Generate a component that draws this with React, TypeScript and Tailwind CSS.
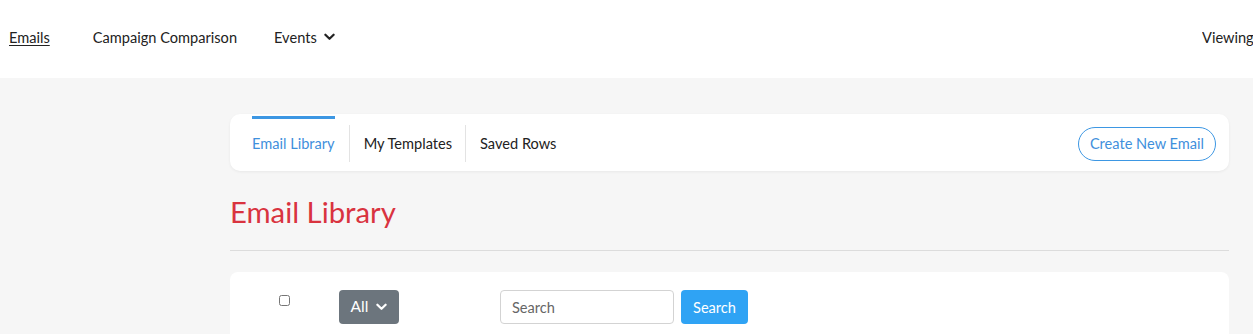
import React from "react";

function Chevron({ className }: { className?: string }) {
  return (
    <svg viewBox="0 0 12 8" className={className} fill="none" stroke="currentColor" strokeWidth="2.4" strokeLinecap="round" strokeLinejoin="round">
      <path d="M1.5 1.5 L6 6 L10.5 1.5" />
    </svg>
  );
}

export default function App() {
  return (
    <div className="h-[334px] bg-[#f6f6f6] text-[#222] overflow-hidden" style={{ fontFamily: "Lato, 'Open Sans', sans-serif" }}>
      <header className="h-[78px] bg-white flex items-center justify-between text-[14.6px] whitespace-nowrap pb-[3px]">
        <nav className="flex items-center">
          <a className="ml-[9px] underline underline-offset-2 text-[#222]">Emails</a>
          <a className="ml-[43px] text-[#222]">Campaign Comparison</a>
          <a className="ml-[37px] flex items-center text-[#222]">
            Events
            <Chevron className="ml-[7px] w-[11px] h-[8px]" />
          </a>
        </nav>
        <div className="w-[51px] overflow-hidden">Viewing</div>
      </header>

      <main className="ml-[230px] mr-[24px] pt-[36px]">
        <div className="relative h-[57px] bg-white rounded-[10px] shadow-[0_1px_3px_rgba(0,0,0,0.06)] flex items-center justify-between text-[14.6px] pr-[13px]">
          <div className="flex items-center h-full pt-[2px]">
            <div className="relative ml-[22px] h-full flex items-center text-[#3f90dc]">
              <span className="absolute left-0 right-0 top-0 h-[3px] bg-[#3d97e3]" />
              Email Library
            </div>
            <div className="w-px h-[37px] bg-[#e3e3e3] ml-[14px]" />
            <div className="ml-[14px] text-[#222]">My Templates</div>
            <div className="w-px h-[37px] bg-[#e3e3e3] ml-[13px]" />
            <div className="ml-[14px] text-[#222]">Saved Rows</div>
          </div>
          <button className="h-[34px] px-[11px] mt-[2px] rounded-full border border-[#3d97e3] text-[#3f90dc] text-[14.6px] bg-white">
            Create New Email
          </button>
        </div>

        <h1 className="mt-[23px] text-[29.3px] leading-[36px] text-[#d9333f]">Email Library</h1>
        <div className="mt-[20px] h-px bg-[#dcdcdc]" />

        <div className="mt-[21px] bg-white rounded-t-[8px] h-[80px] flex items-start pt-[18px]">
          <input type="checkbox" className="ml-[49px] mt-[5px] w-[11px] h-[11px] accent-gray-500" />
          <button className="ml-[49px] h-[34px] w-[60px] bg-[#6c757d] rounded-[4px] text-white text-[15.5px] flex items-center justify-center gap-[8px]">
            All
            <Chevron className="w-[11px] h-[8px]" />
          </button>
          <input
            placeholder="Search"
            className="ml-[101px] h-[34px] w-[174px] border border-[#d3d3d3] rounded-[4px] px-[11px] text-[14.6px] placeholder:text-[#666] outline-none"
          />
          <button className="ml-[7px] h-[34px] w-[67px] bg-[#2fa3f4] rounded-[4px] text-white text-[14.6px] pt-[1px]">Search</button>
        </div>
      </main>
    </div>
  );
}
